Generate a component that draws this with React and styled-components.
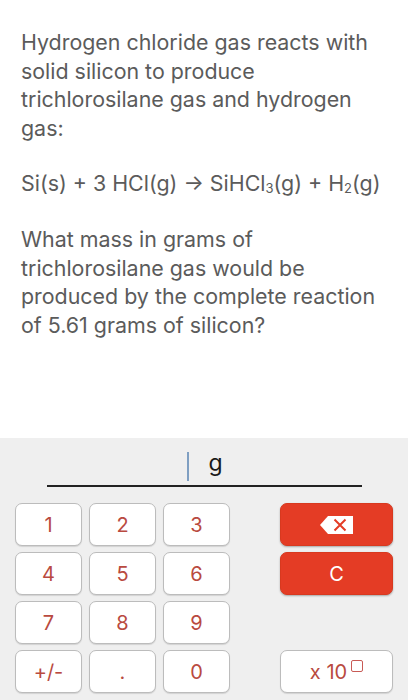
import React from 'react';
import styled, { createGlobalStyle } from 'styled-components';

const GlobalStyle = createGlobalStyle`
  html, body {
    margin: 0;
    padding: 0;
    background: #ffffff;
  }
  body {
    font-family: Inter, "Noto Sans", Arial, sans-serif;
  }
`;

const Page = styled.div`
  display: flex;
  flex-direction: column;
  height: 700px;
  overflow: hidden;
`;

const Question = styled.div`
  padding: 28px 20px 0 21px;
  color: #5b5b5b;
  font-size: 21.4px;
  line-height: 28.6px;
`;

const Para = styled.p`
  margin: 0 0 27px 0;
`;

const Sub = styled.span`
  font-size: 13px;
  vertical-align: -2px;
  line-height: 0;
`;

const Keypad = styled.div`
  margin-top: auto;
  height: 262px;
  background: #efefef;
  box-sizing: border-box;
`;

const AnswerRow = styled.div`
  width: 315px;
  height: 49px;
  margin: 0 auto;
  box-sizing: border-box;
  border-bottom: 2px solid #222;
  display: flex;
  align-items: flex-end;
  justify-content: center;
  padding: 0 0 4px 0;
`;

const Cursor = styled.div`
  width: 2px;
  height: 29px;
  background: #7f9fc2;
  margin: 0 19px 0 2px;
`;

const Unit = styled.span`
  font-size: 23px;
  color: #1a1a1a;
  line-height: 29px;
  position: relative;
  top: -3px;
`;

const KeyArea = styled.div`
  display: flex;
  justify-content: space-between;
  padding: 16px 15px 0 15px;
`;

const NumGrid = styled.div`
  display: grid;
  grid-template-columns: repeat(3, 67px);
  grid-auto-rows: 43px;
  column-gap: 7px;
  row-gap: 6px;
`;

const SideGrid = styled.div`
  display: grid;
  grid-template-columns: 113px;
  grid-template-rows: repeat(4, 43px);
  row-gap: 6px;
`;

const Key = styled.div`
  display: flex;
  align-items: center;
  justify-content: center;
  box-sizing: border-box;
  border-radius: 7px;
  font-size: 20px;
  background: ${(p) => (p.$red ? '#e43c25' : '#ffffff')};
  color: ${(p) => (p.$red ? '#ffffff' : '#b94a40')};
  border: 1px solid ${(p) => (p.$red ? '#d8391f' : '#bcbcbc')};
  box-shadow: ${(p) =>
    p.$red ? '0 1px 2px rgba(0,0,0,0.3)' : '0 1px 1px rgba(0,0,0,0.12)'};
  grid-row: ${(p) => p.$row || 'auto'};
`;

const Sup = styled.span`
  display: inline-block;
  width: 10px;
  height: 10px;
  border: 1.5px solid #c85a55;
  border-radius: 2px;
  margin-left: 4px;
  position: relative;
  top: -6px;
`;

const BackIcon = () => (
  <svg width="36" height="20" viewBox="0 0 36 20">
    <path d="M9 1 H34 V19 H9 L1 10 Z" fill="#ffffff" />
    <path d="M15.5 4.5 L26.5 15.5 M26.5 4.5 L15.5 15.5" stroke="#e43c25" strokeWidth="2" />
  </svg>
);

const keys = ['1', '2', '3', '4', '5', '6', '7', '8', '9', '+/-', '.', '0'];

export default function App() {
  return (
    <Page>
      <GlobalStyle />
      <Question>
        <Para>
          Hydrogen chloride gas reacts with solid silicon to produce
          trichlorosilane gas and hydrogen gas:
        </Para>
        <Para>
          Si(s) + 3 HCl(g) → SiHCl<Sub>3</Sub>(g) + H<Sub>2</Sub>(g)
        </Para>
        <Para>
          What mass in grams of trichlorosilane gas would be produced by the
          complete reaction of 5.61 grams of silicon?
        </Para>
      </Question>
      <Keypad>
        <AnswerRow>
          <Cursor />
          <Unit>g</Unit>
        </AnswerRow>
        <KeyArea>
          <NumGrid>
            {keys.map((k) => (
              <Key key={k}>{k}</Key>
            ))}
          </NumGrid>
          <SideGrid>
            <Key $red $row={1}>
              <BackIcon />
            </Key>
            <Key $red $row={2}>C</Key>
            <Key $row={4}>
              x 10<Sup />
            </Key>
          </SideGrid>
        </KeyArea>
      </Keypad>
    </Page>
  );
}
